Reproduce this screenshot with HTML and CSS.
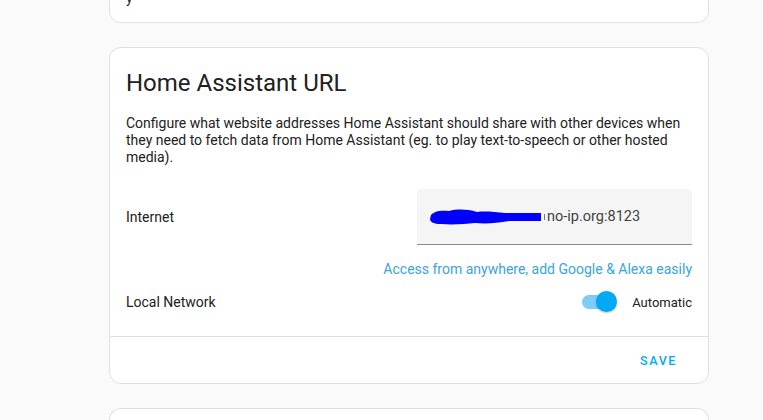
FILE: index.html
```html
<!DOCTYPE html>
<html>
<head>
<meta charset="utf-8">
<link rel="stylesheet" href="styles.css">
</head>
<body>
<div class="page">
  <div class="card card-prev">
    <div class="prev-body">y</div>
  </div>

  <div class="card">
    <h1 class="card-header">Home Assistant URL</h1>
    <div class="card-content">
      <p class="desc">Configure what website addresses Home Assistant should share with other devices when they need to fetch data from Home Assistant (eg. to play text-to-speech or other hosted media).</p>
      <div class="row row-internet">
        <div class="label">Internet</div>
        <div class="textfield">
          <span class="redact"><svg width="118" height="22" viewBox="0 0 118 22"><path d="M2 9 C5 5 12 4 20 5 C28 3 38 3 48 6 C56 5 66 6 76 7 L112 7 L112 15 L80 15 C68 17 58 18 46 17 C36 18 24 19 12 18 C5 18 1 16 1 13 Z" fill="#0000ff"/><rect x="115" y="8" width="1" height="6" fill="#777"/></svg></span><span class="url">no-ip.org:8123</span>
        </div>
      </div>
      <div class="row row-link">
        <a class="link">Access from anywhere, add Google &amp; Alexa easily</a>
      </div>
      <div class="row row-local">
        <div class="label">Local Network</div>
        <div class="switch-wrap">
          <span class="switch"><span class="track"></span><span class="thumb"></span></span>
          <span class="auto">Automatic</span>
        </div>
      </div>
    </div>
    <div class="card-actions">
      <button class="btn">Save</button>
    </div>
  </div>

  <div class="card card-next"></div>
</div>
</body>
</html>
```

FILE: styles.css
```css
html, body {
  margin: 0;
  padding: 0;
  background: #fafafa;
  font-family: Roboto, "Noto Sans", sans-serif;
  color: #212121;
  overflow: hidden;
  height: 420px;
}
.page {
  width: 600px;
  margin-left: 109px;
  display: flex;
  flex-direction: column;
  gap: 24px;
  margin-top: -38px;
}
.card {
  background: #fff;
  border: 1px solid #e0e0e0;
  border-radius: 12px;
  box-sizing: border-box;
}
.card-prev {
  height: 61px;
}
.prev-body {
  padding: 27px 16px 0;
  font-size: 14px;
  color: #212121;
}
.card-header {
  margin: 0;
  font-size: 24px;
  font-weight: 400;
  line-height: 32px;
  padding: 19px 16px 8px;
  color: #212121;
}
.card-content {
  padding: 8px 16px 21px;
}
.desc {
  margin: 0;
  font-size: 14px;
  line-height: 17px;
  color: #212121;
}
.row {
  display: flex;
  align-items: center;
  justify-content: space-between;
}
.label {
  font-size: 14px;
}
.row-internet {
  margin-top: 23px;
}
.textfield {
  width: 275px;
  height: 56px;
  background: #f5f5f5;
  border-bottom: 1px solid #8a8a8a;
  border-radius: 4px 4px 0 0;
  display: flex;
  align-items: center;
  padding-left: 12px;
  box-sizing: border-box;
  font-size: 14.5px;
  color: #424242;
}
.redact {
  display: inline-flex;
}
.row-link {
  justify-content: flex-end;
  margin-top: 16px;
}
.link {
  color: #3ba4dd;
  font-size: 14px;
  line-height: 17px;
  text-decoration: none;
}
.row-local {
  margin-top: 11px;
  height: 26px;
}
.switch-wrap {
  display: flex;
  align-items: center;
  gap: 15px;
}
.switch {
  position: relative;
  width: 35px;
  height: 22px;
  display: inline-block;
}
.track {
  position: absolute;
  left: 0;
  top: 4px;
  width: 34px;
  height: 14px;
  border-radius: 7px;
  background: #7ccdf8;
}
.thumb {
  position: absolute;
  left: 14px;
  top: 0;
  width: 21px;
  height: 21px;
  border-radius: 50%;
  background: #03a9f4;
  box-shadow: 0 1px 2px rgba(0,0,0,0.25);
}
.auto {
  font-size: 13px;
  color: #212121;
}
.card-actions {
  border-top: 1px solid #e0e0e0;
  padding: 5px 16px;
  display: flex;
  justify-content: flex-end;
}
.btn {
  height: 36px;
  border: none;
  background: none;
  padding: 0 15px 0 8px;
  font-family: Roboto, sans-serif;
  font-weight: 500;
  font-size: 12.5px;
  letter-spacing: 1.6px;
  text-transform: uppercase;
  color: #03a9f4;
}
.card-next {
  height: 12px;
  border-bottom: none;
  border-radius: 12px 12px 0 0;
}
```
